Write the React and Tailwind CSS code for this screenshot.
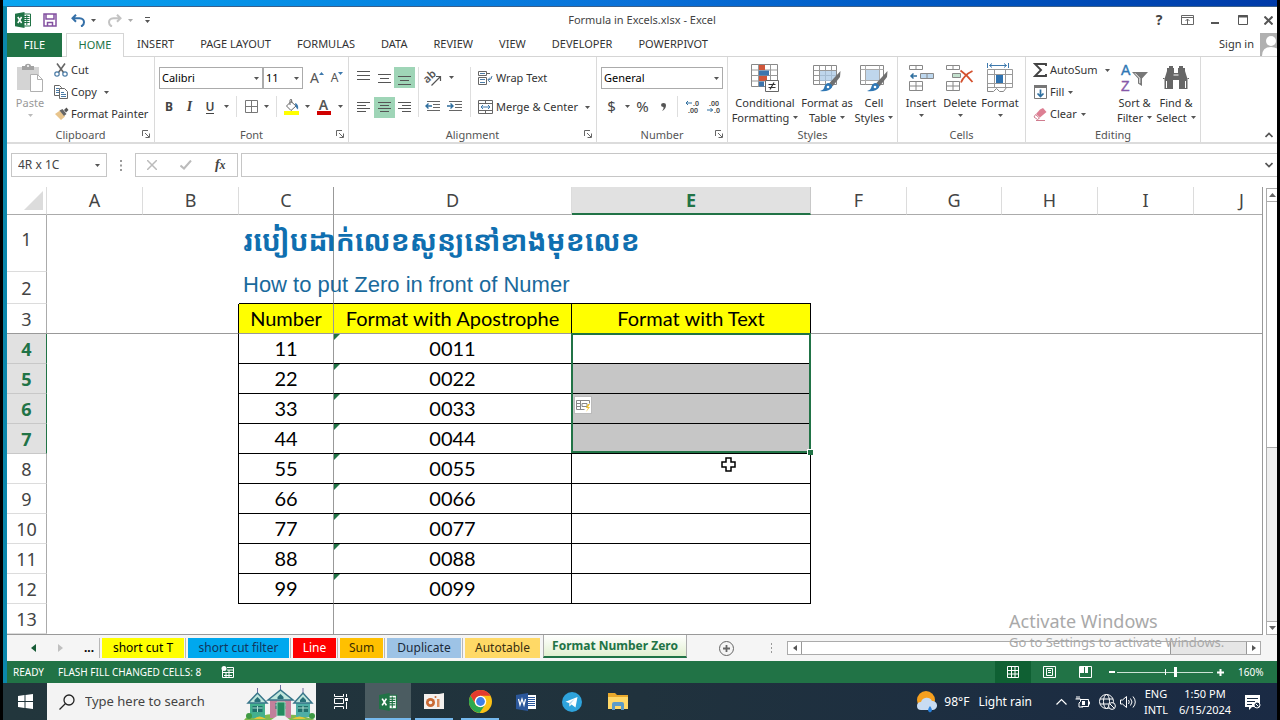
import React from "react";

const ui = "font-['Noto_Sans','Open_Sans',sans-serif]";

function Caret({ className = "", fill = "#555" }) {
  return (
    <svg width="5" height="3" viewBox="0 0 5 3" className={`shrink-0 ${className}`} aria-hidden="true">
      <path d="M0 0h5L2.500 3z" fill={fill} />
    </svg>
  );
}

function CaretButton({ label, className = "" }) {
  return (
    <button aria-label={label} className={`flex items-center justify-center self-stretch ${className}`}>
      <Caret />
    </button>
  );
}

function Launcher({ label }) {
  return (
    <button aria-label={label} className="absolute right-1 top-1">
      <svg width="8" height="8" viewBox="0 0 8 8" fill="none" stroke="#666">
        <path d="M.5 6V.5H6M3 3l4 4M7.500 3.500v4h-4" />
      </svg>
    </button>
  );
}

function Group({ name, launcher, width, children }) {
  return (
    <section aria-label={name} className={`flex shrink-0 flex-col ${width}`}>
      <div className="flex grow border-r border-[#dadada]">
        <div className="flex grow flex-col">
          <div className="flex h-[69px] items-start">{children}</div>
          <div className="relative h-4 text-center leading-[18px] text-[#555]">
            {name}
            {launcher && <Launcher label={`${name} settings`} />}
          </div>
        </div>
      </div>
    </section>
  );
}

function Sep({ className = "h-[50px]" }) {
  return <div className={`w-px shrink-0 bg-[#dedede] ${className}`} />;
}

function IconButton({ label, active, className = "w-[21px]", children }) {
  return (
    <button
      aria-label={label}
      className={`flex h-[21px] shrink-0 items-center justify-center ${active ? "bg-[#9fd5b7]" : ""} ${className}`}
    >
      {children}
    </button>
  );
}

function Lines({ rows }) {
  return (
    <svg width="15" height="15" viewBox="0 0 15 15" stroke="#555" aria-hidden="true">
      {rows.map(([x1, x2, y]) => (
        <path key={y} d={`M${x1} ${y}.5H${x2}`} />
      ))}
    </svg>
  );
}

function BigButton({ icon, lines, caretBelow, muted, width }) {
  return (
    <button className={`flex shrink-0 flex-col items-center pt-1 leading-[15px] ${muted ? "text-[#999]" : "text-[#333]"} ${width}`}>
      <span className="flex h-[34px] items-center justify-center">{icon}</span>
      {lines.map((t, i) => (
        <span key={t} className="flex items-center gap-1 whitespace-nowrap">
          {t}
          {!caretBelow && i === lines.length - 1 && <Caret />}
        </span>
      ))}
      {caretBelow && <Caret className="mt-1" fill={muted ? "#bbb" : "#555"} />}
    </button>
  );
}

function SmallButton({ icon, children, caret }) {
  return (
    <button className="flex h-[22px] items-center gap-0.5 whitespace-nowrap text-[#333]">
      <span className="flex w-4 justify-center">{icon}</span>
      {children}
      {caret && <Caret className="ml-0.5" />}
    </button>
  );
}

function Picker({ label, value, width }) {
  return (
    <div className={`relative flex h-[22px] items-center ${width}`}>
      <select
        aria-label={label}
        defaultValue={value}
        className="h-full w-full appearance-none border border-[#ababab] bg-white pl-0.5 text-black outline-none"
      >
        <option>{value}</option>
      </select>
      <Caret className="pointer-events-none absolute right-1" />
    </div>
  );
}

/* ---------- ribbon drawings ---------- */

const ExcelMark = ({ size = 16 }) => (
  <svg width={size} height={size} viewBox="0 0 16 16" aria-hidden="true">
    <path d="M8 2h7.500v12H8z" fill="#fff" stroke="#217346" />
    <path d="M9 4.500h5.500M9 6.500h5.500M9 8.500h5.500M9 10.500h5.500M11.800 3v10" stroke="#217346" />
    <path d="M0 1.800 9.500 0v16L0 14.200z" fill="#217346" />
    <path d="m2.800 5 3.800 6M6.600 5l-3.800 6" stroke="#fff" strokeWidth="1.500" />
  </svg>
);

const PasteIcon = () => (
  <svg width="28" height="30" viewBox="0 0 28 30" aria-hidden="true">
    <path d="M1 4h22v23H1z" fill="#d4d4d4" />
    <path d="M6 7V3h3c0-3 6-3 6 0h3v4z" fill="#a2a2a2" />
    <circle cx="12" cy="3" r="1" fill="#fff" />
    <path d="M14.500 11.500h7l5 5v12h-12z" fill="#fff" stroke="#b0b0b0" />
    <path d="M21.500 11.500v5h5" fill="none" stroke="#b0b0b0" />
  </svg>
);

const CutIcon = () => (
  <svg width="14" height="14" viewBox="0 0 14 14" fill="none" aria-hidden="true">
    <path d="M3 0.500 9.500 9.500M11 .5 4.500 9.500" stroke="#666" strokeWidth="1.600" />
    <circle cx="3" cy="11" r="2.200" stroke="#4a7ba6" strokeWidth="1.200" />
    <circle cx="11" cy="11" r="2.200" stroke="#4a7ba6" strokeWidth="1.200" />
  </svg>
);

const CopyIcon = () => (
  <svg width="14" height="14" viewBox="0 0 14 14" fill="#fff" stroke="#666" aria-hidden="true">
    <path d="M.5.5h5l2 2v8h-7z" />
    <path d="M2 3.500h3M2 5.500h3M2 7.500h3" stroke="#4a7ba6" />
    <path d="M5.500 3.500h5l3 3v7h-8z" />
    <path d="M7 7.500h3M7 9.500h5M7 11.500h5" stroke="#4a7ba6" />
  </svg>
);

const BrushIcon = () => (
  <svg width="15" height="14" viewBox="0 0 15 14" aria-hidden="true">
    <path d="M1 7 6 3.500l5 6L7 13z" fill="#e8c48c" />
    <path d="m5.500 3.500 3-1.500 4 5-2.500 2z" fill="#666" />
    <path d="m10 3 2.500-2.500 2 2.500L12 5.500z" fill="#555" />
  </svg>
);

const BordersIcon = () => (
  <svg width="13" height="13" viewBox="0 0 13 13" fill="none" stroke="#777" aria-hidden="true">
    <path d="M.5.5h12v12H.5zM6.500.5v12M.5 6.500h12" />
  </svg>
);

const FillIcon = () => (
  <svg width="16" height="16" viewBox="0 0 16 16" aria-hidden="true">
    <path d="M0 12h15v4H0z" fill="#ffff00" />
    <path d="M7 2.500 12 7l-5 4.500L2.500 7z" fill="#fff" stroke="#666" />
    <path d="M6 6V1.500q0-1.500 1.500-1L8 4" fill="none" stroke="#666" />
    <path d="M11 4q4 1 3 6.500Q12 9 11.500 7z" fill="#3d79ad" />
  </svg>
);

const FontColorIcon = () => (
  <span className="flex flex-col items-center">
    <span className="h-3 text-sm font-semibold leading-3 text-[#555]">A</span>
    <span className="h-1 w-3.5 bg-[#d00000]" />
  </span>
);

const OrientIcon = () => (
  <svg width="16" height="16" viewBox="0 0 16 16" className="overflow-visible" aria-hidden="true">
    <text x="0" y="11" fontSize="11" fontWeight="600" fill="#555" transform="rotate(-42 4 11)" fontFamily="Noto Sans">ab</text>
    <path d="M5.500 15.500 14 7M10 6.500h4.500V11" fill="none" stroke="#555" strokeWidth="1.200" />
  </svg>
);

const IndentIcon = ({ out }) => (
  <svg width="15" height="11" viewBox="0 0 15 11" fill="none" aria-hidden="true">
    <path d="M2 .5h13M8 3.500h7M8 6.500h7M2 9.500h13" stroke="#666" />
    <path d={out ? "M7 5H1M3.500 2.500 1 5l2.500 2.500" : "M0 5h6M3.500 2.500 6 5 3.500 7.500"} stroke="#2f6f9f" strokeWidth="1.400" />
  </svg>
);

const WrapIcon = () => (
  <svg width="15" height="14" viewBox="0 0 15 14" fill="none" stroke="#666" aria-hidden="true">
    <path d="M.5.500h8v4h-8zM.5 6.500h8v7h-8zM8.500 2.500H12" />
    <path d="M2 2.500h5M2 8.500h5M2 11.500h5" stroke="#4a7ba6" />
    <path d="M14 5q0 4-4 4M12 6.500 9.800 9l2.200 2" stroke="#4a7ba6" />
  </svg>
);

const MergeIcon = () => (
  <svg width="15" height="14" viewBox="0 0 15 14" fill="none" stroke="#666" aria-hidden="true">
    <path d="M.5.500h14v13H.5zM.5 3.500h14M.5 10.500h14M7.500.500v3M7.500 10.500v3" />
    <path d="M3 7h9M5 5 3 7l2 2M10 5l2 2-2 2" stroke="#3d79ad" />
  </svg>
);

const DecimalIcon = ({ less }) => (
  <svg width="15" height="13" viewBox="0 0 15 13" fontFamily="Noto Sans" fontSize="7" fill="#444" aria-hidden="true">
    <text x={less ? 3 : 8} y="5.500" fontWeight="600">{less ? ".00" : ".0"}</text>
    <text x={less ? 8 : 3} y="12.500" fontWeight="600">{less ? ".0" : ".00"}</text>
    <path d={less ? "M1 10h6M4.500 8l2 2-2 2" : "M1 3h6M3 1 1 3l2 2"} fill="none" stroke="#2f6f9f" />
  </svg>
);

const CondIcon = () => (
  <svg width="28" height="28" viewBox="0 0 28 28" aria-hidden="true">
    <path d="M.5.500h26v22H.5z" fill="#fff" stroke="#888" />
    <path d="M.5 6h26M.5 11.500h26M.5 17h26M7.500.500v22M19.500.500v22" stroke="#999" />
    <path d="M8 1h6v5H8zM8 12h8v5H8z" fill="#d0563a" />
    <path d="M8 6.500h10v5H8zM8 17.500h5v5H8z" fill="#3d75ad" />
    <path d="M14.500 16.500h13v11h-13z" fill="#fff" stroke="#666" />
    <path d="M17.500 20.500h7M17.500 23.500h7M23 18.500l-4 7" stroke="#333" strokeWidth="1.200" />
  </svg>
);

const TableBrushIcon = ({ plain }) => (
  <svg width="28" height="28" viewBox="0 0 28 28" aria-hidden="true">
    <path d="M.5 1.500h23v19H.5z" fill="#fff" stroke="#888" />
    {plain ? (
      <path d="M.5 5.500h23M.5 16.500h23M5.500 1.500v19M19.500 1.500v19" stroke="#aaa" />
    ) : (
      <path d="M.5 6.500h23M.5 11.500h23M.5 16.500h23M6.500 1.500v19M12.500 1.500v19M18.500 1.500v19" stroke="#999" />
    )}
    <path d={plain ? "M6 6h13v10H6z" : "M7 7h16v10H7z"} fill="#a9c8e6" fillOpacity=".75" />
    <path d="M27.500 7 16 19.500l3.500 3L27 13z" fill="#707070" />
    <path d="M15.500 19q4.500 1 3.500 4.500Q16 28 7 27q4-1 4.500-4.500 1-3.500 4-3.500z" fill="#2f77b4" />
    <circle cx="15" cy="23" r="1.300" fill="#fff" />
  </svg>
);

const InsertIcon = () => (
  <svg width="26" height="27" viewBox="0 0 26 27" fill="#fff" stroke="#888" aria-hidden="true">
    <path d="M1.500.500h13v4h-13zM8 .5v4M1.500 16.500h13v9h-13zM8 16.500v9M1.500 21h13" />
    <path d="M12.500 8.500h13v5h-13zM19 8.500v5" fill="#bdd7ee" />
    <path d="M9 11H3M5.500 8.500 3 11l2.500 2.500" fill="none" stroke="#2f6f9f" strokeWidth="1.500" />
  </svg>
);

const DeleteIcon = () => (
  <svg width="28" height="27" viewBox="0 0 28 27" fill="#fff" stroke="#888" aria-hidden="true">
    <path d="M.5.500h13v4H.5zM7 .5v4M.5 16.500h13v9H.5zM7 16.500v9M.5 21h13" />
    <path d="M6.500 8.500h8v4h-8z" fill="#c3e0cd" />
    <path d="M14.500 5.500Q21 10 26.500 17M26.500 6Q18 10 15 17.500" fill="none" stroke="#d4512e" strokeWidth="1.800" />
  </svg>
);

const FormatIcon = () => (
  <svg width="28" height="30" viewBox="0 0 28 30" fill="none" aria-hidden="true">
    <path d="M1.500 0v5M22.500 0v5M3.500 2.500h17M6 .5l-2.500 2L6 4.500M18 .5l2.500 2L18 4.500" stroke="#3d79ad" />
    <path d="M1.500 6.500h25v18h-25zM1.500 11.500h25M1.500 20.500h25M8.500 6.500v18M19.500 6.500v18" stroke="#999" fill="#fff" />
    <path d="M10 12h7v8h-7z" fill="#2f72b0" />
    <path d="M1.500 24v4.500h6l3-3 3 3h4l3-4" stroke="#888" />
  </svg>
);

const SumIcon = () => (
  <svg width="14" height="14" viewBox="0 0 14 14" fill="none" aria-hidden="true">
    <path d="M13 3V1H2l6 6-6 6h11v-2" stroke="#444" strokeWidth="1.900" />
  </svg>
);

const FillDownIcon = () => (
  <svg width="13" height="14" viewBox="0 0 13 14" fill="none" aria-hidden="true">
    <path d="M.5.500h12v13H.5z" stroke="#777" />
    <path d="M0 0h13v3H0z" fill="#777" />
    <path d="M6.500 4.500v7M3.500 8.500l3 3 3-3" stroke="#2f6f9f" strokeWidth="1.700" />
  </svg>
);

const EraserIcon = () => (
  <svg width="14" height="13" viewBox="0 0 14 13" aria-hidden="true">
    <path d="M7 1.500 10 0l3.500 4L7 9.500 3 6z" fill="#dd7f93" />
    <path d="M2.500 6.500 6.500 10l-2 1.500L1 9z" fill="#fff" stroke="#cf7c8e" />
    <path d="M3 12.500h9" stroke="#cf7c8e" />
  </svg>
);

const SortIcon = () => (
  <svg width="28" height="28" viewBox="0 0 28 28" className="overflow-visible" aria-hidden="true">
    <g fontFamily="Liberation Sans" fontSize="14" strokeWidth=".4">
      <text x="0" y="11" fill="#2f77b4" stroke="#2f77b4">A</text>
      <text x="0" y="27" fill="#8658a8" stroke="#8658a8">Z</text>
    </g>
    <path d="M11 8h16l-6 6.500V22l-4-2.500v-5z" fill="#777" />
    <path d="M14 9.300 18.800 14.200v5" fill="none" stroke="#fff" />
  </svg>
);

const FindIcon = () => (
  <svg width="26" height="24" viewBox="0 0 26 24" fill="#666" aria-hidden="true">
    <path d="M4 5V2h2V0h4v2h1v5h4V2h1V0h4v2h2v3l2.500 8v10H16v-9h-6v9H1.500V13z" />
    <path d="M3.500 15v7M22.500 15v7M10.500 9h5" stroke="#fff" />
    <path d="M0 12.500h1.500M24.500 12.500H26" stroke="#666" />
  </svg>
);

/* ---------- window chrome ---------- */

function TitleBar() {
  return (
    <header className="grid h-[26px] grid-cols-[1fr_auto_1fr] items-center text-[#444]">
      <div className="flex items-center pl-2">
        <ExcelMark />
        <button aria-label="Save" className="ml-3">
          <svg width="14" height="14" viewBox="0 0 14 14" fill="none" stroke="#8250a0" strokeWidth="1.500">
            <path d="M1 1h12v12H1z" fill="#fff" />
            <path d="M3 1v5h8V1" />
            <path d="M4.500 13V9.500h5V13" />
          </svg>
        </button>
        <button aria-label="Undo" className="ml-3.5 flex items-center gap-1.5">
          <svg width="14" height="13" viewBox="0 0 14 13" fill="none" stroke="#3570a8" strokeWidth="2">
            <path d="M5 .8 1.500 4.300 5 7.800M2 4.300h6.500c3.500 0 4.500 2.500 4.500 4 0 2-1 3.500-3 4.200" />
          </svg>
          <Caret />
        </button>
        <button aria-label="Redo" className="ml-3 flex items-center gap-1.5 opacity-50">
          <svg width="14" height="13" viewBox="0 0 14 13" fill="none" stroke="#888" strokeWidth="2">
            <path d="M9 .8l3.500 3.500L9 7.800M12 4.300H5.500C2 4.300 1 6.800 1 8.300c0 2 1 3.500 3 4.200" />
          </svg>
          <Caret />
        </button>
        <button aria-label="Customize toolbar" className="ml-3">
          <svg width="5" height="6" viewBox="0 0 5 6"><path d="M0 0h5v1H0zM0 3h5L2.500 6z" fill="#555" /></svg>
        </button>
      </div>
      <h1 className="text-[11px]">Formula in Excels.xlsx - Excel</h1>
      <div className="flex items-center justify-end gap-4">
        <button aria-label="Help" className="w-3 text-sm font-bold leading-4">?</button>
        <button aria-label="Ribbon options">
          <svg width="13" height="10" viewBox="0 0 13 10" fill="none" stroke="#666"><path d="M.5.500h12v9H.5zM.5 2.500h12M6.500 9V4M4.500 6l2-2 2 2" /></svg>
        </button>
        <button aria-label="Minimize">
          <svg width="10" height="10" viewBox="0 0 10 10"><path d="M1 7h8v2H1z" fill="#555" /></svg>
        </button>
        <button aria-label="Maximize" className="ml-0.5">
          <svg width="10" height="10" viewBox="0 0 10 10" fill="none" stroke="#555"><path d="M.5.500h9v9h-9z" /><path d="M0 1.500h10" strokeWidth="2" /></svg>
        </button>
        <button aria-label="Close" className="mr-1">
          <svg width="9" height="9" viewBox="0 0 9 9" stroke="#555" strokeWidth="2"><path d="m.5.500 8 8M8.500.500l-8 8" /></svg>
        </button>
      </div>
    </header>
  );
}

const tabs = ["INSERT", "PAGE LAYOUT", "FORMULAS", "DATA", "REVIEW", "VIEW", "DEVELOPER", "POWERPIVOT"];

function TabRow() {
  return (
    <nav className="flex h-6 text-[#333]">
      <button className="w-[55px] bg-[#217346] text-white">FILE</button>
      <div className="w-1 border-b border-[#d5d5d5]" />
      <button className="w-[58px] border-x border-t border-[#d5d5d5] text-[#217346]">HOME</button>
      <div className="flex grow items-center border-b border-[#d5d5d5]">
        {tabs.map((t) => (
          <button key={t} className="px-[13px]">{t}</button>
        ))}
        <button className="ml-auto mr-1.5">Sign in</button>
        <svg width="17" height="23" viewBox="0 0 17 23" aria-hidden="true">
          <path d="M0 0h17v23H0z" fill="#b0b0b0" />
          <circle cx="11" cy="8" r="5" fill="#fff" />
          <path d="M2 23q0-9 9-9t9 9z" fill="#fff" />
        </svg>
      </div>
    </nav>
  );
}

function Ribbon() {
  return (
    <div className="flex h-[87px] border-b-2 border-[#dcdcdc]">
      <Group name="Clipboard" launcher width="w-[148px]">
        <BigButton muted icon={<PasteIcon />} lines={["Paste"]} caretBelow width="w-[46px]" />
        <div className="flex flex-col items-start pt-0.5">
          <SmallButton icon={<CutIcon />}>Cut</SmallButton>
          <span className="flex">
            <SmallButton icon={<CopyIcon />}>Copy</SmallButton>
            <CaretButton label="Copy options" className="w-5" />
          </span>
          <SmallButton icon={<BrushIcon />}>Format Painter</SmallButton>
        </div>
      </Group>

      <Group name="Font" launcher width="w-[194px]">
        <div className="flex flex-col gap-2 pl-1 pt-2.5">
          <div className="flex">
            <Picker label="Font" value="Calibri" width="w-[104px]" />
            <Picker label="Font size" value="11" width="w-10" />
            <IconButton label="Increase font size" className="ml-1 w-5">
              <span className="text-sm text-[#555]">A</span>
              <svg width="5" height="3" viewBox="0 0 5 3" className="mb-2"><path d="M0 3h5L2.500 0z" fill="#3d79ad" /></svg>
            </IconButton>
            <IconButton label="Decrease font size" className="w-5">
              <span className="text-xs text-[#555]">A</span>
              <svg width="5" height="3" viewBox="0 0 5 3" className="mb-2"><path d="M0 0h5L2.500 3z" fill="#3d79ad" /></svg>
            </IconButton>
          </div>
          <div className="-mt-px flex text-xs text-[#444]">
            <IconButton label="Bold" className="w-5"><b>B</b></IconButton>
            <IconButton label="Italic"><i className="font-['Liberation_Serif',serif] text-sm font-bold">I</i></IconButton>
            <IconButton label="Underline" className="w-5"><span className="border-b border-[#444] font-semibold leading-[13px]">U</span></IconButton>
            <CaretButton label="Underline style" className="w-3" />
            <Sep className="mx-1 h-[21px]" />
            <IconButton label="Borders"><BordersIcon /></IconButton>
            <CaretButton label="Border style" className="w-2" />
            <Sep className="mx-1.5 h-[21px]" />
            <IconButton label="Fill color" className="w-[18px]"><FillIcon /></IconButton>
            <CaretButton label="Fill colors" className="w-3" />
            <IconButton label="Font color"><FontColorIcon /></IconButton>
            <CaretButton label="Font colors" className="w-3" />
          </div>
        </div>
      </Group>

      <Group name="Alignment" launcher width="w-[248px]">
        <div className="flex gap-[3px] pl-1 pt-2.5">
          <div className="grid grid-cols-3 gap-y-2">
            <IconButton label="Top align"><Lines rows={[[1, 14, 1], [1, 14, 5], [1, 14, 9]]} /></IconButton>
            <IconButton label="Middle align"><Lines rows={[[1, 14, 4], [3, 12, 8], [1, 14, 12]]} /></IconButton>
            <IconButton label="Bottom align" active><Lines rows={[[1, 14, 6], [3, 12, 10], [1, 14, 14]]} /></IconButton>
            <IconButton label="Align left"><Lines rows={[[1, 14, 2], [1, 10, 5], [1, 14, 8], [1, 10, 11]]} /></IconButton>
            <IconButton label="Center" active><Lines rows={[[1, 14, 2], [3, 12, 5], [1, 14, 8], [3, 12, 11]]} /></IconButton>
            <IconButton label="Align right"><Lines rows={[[1, 14, 2], [5, 14, 5], [1, 14, 8], [5, 14, 11]]} /></IconButton>
          </div>
          <Sep />
          <div className="flex w-[46px] flex-col gap-2">
            <span className="flex">
              <IconButton label="Orientation" className="w-6"><OrientIcon /></IconButton>
              <CaretButton label="Orientation options" className="w-3" />
            </span>
            <span className="flex gap-px">
              <IconButton label="Decrease indent"><IndentIcon out /></IconButton>
              <IconButton label="Increase indent"><IndentIcon /></IconButton>
            </span>
          </div>
          <Sep />
          <div className="flex flex-col gap-2 pl-1">
            <SmallButton icon={<WrapIcon />}>Wrap Text</SmallButton>
            <span className="-mt-px flex">
              <SmallButton icon={<MergeIcon />}>Merge &amp; Center</SmallButton>
              <CaretButton label="Merge options" className="w-[18px]" />
            </span>
          </div>
        </div>
      </Group>

      <Group name="Number" launcher width="w-[131px]">
        <div className="flex flex-col gap-2 pl-1 pt-2.5">
          <Picker label="Number format" value="General" width="w-[122px]" />
          <div className="-mt-px flex text-[15px] text-[#444]">
            <IconButton label="Currency">$</IconButton>
            <CaretButton label="Currency options" className="w-2.5" />
            <IconButton label="Percent">%</IconButton>
            <IconButton label="Comma style" className="w-5">
              <svg width="5" height="8" viewBox="0 0 5 8"><path d="M0 2a2.500 2 0 0 1 5 0q0 4-4 6 2-2 1.500-4Q0 4 0 2z" fill="#555" /></svg>
            </IconButton>
            <Sep className="mx-1 h-[21px]" />
            <IconButton label="Increase decimal"><DecimalIcon /></IconButton>
            <IconButton label="Decrease decimal"><DecimalIcon less /></IconButton>
          </div>
        </div>
      </Group>

      <Group name="Styles" width="w-[170px]">
        <BigButton icon={<CondIcon />} lines={["Conditional", "Formatting"]} width="w-[74px]" />
        <BigButton icon={<TableBrushIcon />} lines={["Format as", "Table"]} width="w-[50px]" />
        <BigButton icon={<TableBrushIcon plain />} lines={["Cell", "Styles"]} width="w-[44px]" />
      </Group>

      <Group name="Cells" width="w-[128px]">
        <div className="flex pl-1">
          <BigButton icon={<InsertIcon />} lines={["Insert"]} caretBelow width="w-[38px]" />
          <BigButton icon={<DeleteIcon />} lines={["Delete"]} caretBelow width="w-10" />
          <BigButton icon={<FormatIcon />} lines={["Format"]} caretBelow width="w-10" />
        </div>
      </Group>

      <Group name="Editing" width="w-[175px]">
        <div className="flex w-[87px] flex-col items-start pl-1.5 pt-0.5">
          <span className="flex">
            <SmallButton icon={<SumIcon />}>AutoSum</SmallButton>
            <CaretButton label="AutoSum options" className="w-5" />
          </span>
          <SmallButton icon={<FillDownIcon />} caret>Fill</SmallButton>
          <SmallButton icon={<EraserIcon />} caret>Clear</SmallButton>
        </div>
        <BigButton icon={<SortIcon />} lines={["Sort &", "Filter"]} width="w-[43px]" />
        <BigButton icon={<FindIcon />} lines={["Find &", "Select"]} width="w-[40px]" />
      </Group>
      <div className="flex grow items-end justify-end pb-1 pr-1">
        <button aria-label="Collapse ribbon">
          <svg width="8" height="6" viewBox="0 0 8 6" fill="none" stroke="#555" strokeWidth="1.700"><path d="m.5 5 3.500-3.500L7.500 5" /></svg>
        </button>
      </div>
    </div>
  );
}

function FormulaBar() {
  return (
    <div className="flex h-[43px] items-center pb-px pl-1 text-[#444]">
      <div className="flex h-6 w-24 items-center border border-[#c6c6c6] pr-1.5">
        <input aria-label="Name box" defaultValue="4R x 1C" className="w-full min-w-0 pl-1.5 text-xs outline-none" />
        <Caret />
      </div>
      <svg width="2" height="11" viewBox="0 0 2 11" className="mx-[13px]" fill="#999" aria-hidden="true">
        <path d="M0 0h2v2H0zM0 4.500h2v2H0zM0 9h2v2H0z" />
      </svg>
      <div className="flex h-6 w-[103px] items-center justify-around border border-[#c6c6c6]">
        <button aria-label="Cancel">
          <svg width="10" height="10" viewBox="0 0 10 10" stroke="#bbb" strokeWidth="1.500"><path d="m0 0 10 10M10 0 0 10" /></svg>
        </button>
        <button aria-label="Enter">
          <svg width="12" height="10" viewBox="0 0 12 10" fill="none" stroke="#bbb" strokeWidth="2"><path d="m.5 5.500 3.500 3 7-8" /></svg>
        </button>
        <button aria-label="Insert function" className="font-['Liberation_Serif',serif] text-sm font-bold italic leading-4">
          f<span className="text-xs">x</span>
        </button>
      </div>
      <div className="ml-[3px] flex h-6 grow items-center border border-r-0 border-[#c6c6c6] pr-1">
        <input aria-label="Formula" className="w-full outline-none" />
        <button aria-label="Expand formula bar">
          <svg width="8" height="6" viewBox="0 0 8 6" fill="none" stroke="#555" strokeWidth="1.700"><path d="m.5 1 3.500 3.500L7.500 1" /></svg>
        </button>
      </div>
    </div>
  );
}

/* ---------- sheet ---------- */

const letters = ["A", "B", "C", "D", "E", "F", "G", "H", "I", "J"];
const numbers = [11, 22, 33, 44, 55, 66, 77, 88, 99];

function RowHead({ n, selected, freeze }) {
  return (
    <th
      scope="row"
      className={`border-b border-r p-0 ${n === 1 ? "pb-2" : ""} ${
        selected
          ? "border-b-[#c8c8c8] border-r-[#217346] bg-[#e1e1e1] font-bold text-[#217346]"
          : `border-r-[#ababab] font-normal text-[#444] ${freeze ? "border-b-[#999]" : "border-b-[#dcdcdc]"}`
      }`}
    >
      {n}
    </th>
  );
}

function Plain({ n, freeze }) {
  return Array.from({ length: n }, (_, i) => <td key={i} className={freeze ? "border-b border-[#999]" : ""} />);
}

function Sheet() {
  return (
    <table className="w-[1263px] table-fixed border-separate border-spacing-0 text-xl/6 text-black">
      <colgroup>
        <col className="w-10" />
        <col className="w-24" />
        <col className="w-24" />
        <col className="w-[95px]" />
        <col className="w-[238px]" />
        <col className="w-[239px]" />
        <col className="w-24" />
        <col className="w-[95px]" />
        <col className="w-24" />
        <col className="w-24" />
        <col className="w-24" />
      </colgroup>
      <thead className="font-['Noto_Sans',sans-serif] text-lg/6">
        <tr className="h-7">
          <th className="border-b border-r border-b-[#ababab] border-r-[#dcdcdc] p-0">
            <svg width="19" height="19" viewBox="0 0 19 19" className="ml-auto mr-[3px]" aria-hidden="true"><path d="M19 0v19H0z" fill="#dcdcdc" /></svg>
          </th>
          {letters.map((l) => (
            <th
              key={l}
              scope="col"
              className={`border-r p-0 ${
                l === "E"
                  ? "border-b-2 border-b-[#217346] border-r-[#c8c8c8] bg-[#e1e1e1] font-bold text-[#217346]"
                  : `border-b border-b-[#ababab] pb-px font-normal text-[#444] ${l === "C" ? "border-r-[#999]" : "border-r-[#dcdcdc]"}`
              }`}
            >
              {l}
            </th>
          ))}
        </tr>
      </thead>
      <tbody className="font-['Lato','Noto_Sans',sans-serif] [&_th]:font-['Noto_Sans',sans-serif] [&_th]:text-lg/6">
        <tr className="h-[57px]">
          <RowHead n={1} />
          <Plain n={2} />
          <td className="whitespace-nowrap border-r border-[#999] p-0 pb-2 pl-1 align-middle font-['Khmer_OS_Muol_Light','Noto_Sans_Khmer','Noto_Serif_Khmer',sans-serif] text-[28px]/6 font-bold text-[#0f6fb0]">
            របៀបដាក់លេខសូន្យនៅខាងមុខលេខ
          </td>
          <Plain n={7} />
        </tr>
        <tr className="h-8">
          <RowHead n={2} />
          <Plain n={2} />
          <td className="whitespace-nowrap border-b border-r border-b-black border-r-[#999] p-0 pl-1 font-['Liberation_Sans',sans-serif] text-[22px]/6 text-[#1a6a9c]">
            <span className="block pb-1.5">How to put Zero in front of Numer</span>
          </td>
          <td className="border-b border-black" />
          <td className="border-b border-black" />
          <Plain n={5} />
        </tr>
        <tr className="h-[30px]">
          <RowHead n={3} freeze />
          <td className="border-b border-[#999]" />
          <td className="border-b border-r border-b-[#999] border-r-black" />
          <td className="border-b border-r border-[#999] bg-[#ffff00] p-0 pb-0.5 text-center">Number</td>
          <td className="border-b border-r border-b-[#999] border-r-black bg-[#ffff00] p-0 pb-0.5 text-center">Format with Apostrophe</td>
          <td className="border-b border-r border-b-[#999] border-r-black bg-[#ffff00] p-0 pb-0.5 text-center">Format with Text</td>
          <Plain n={5} freeze />
        </tr>
        {numbers.map((v, i) => {
          const n = i + 4;
          return (
            <tr key={n} className="h-[30px]">
              <RowHead n={n} selected={n < 8} />
              <td />
              <td className="border-r border-black" />
              <td className="border-b border-r border-b-black border-r-[#999] p-0 pb-0.5 text-center">{v}</td>
              <td className="relative border-b border-r border-black p-0 pb-0.5 text-center">
                <svg width="6" height="6" viewBox="0 0 6 6" className="absolute left-0 top-0" aria-hidden="true"><path d="M0 0h6L0 6z" fill="#217346" /></svg>
                00{v}
              </td>
              <td className={`relative border-b border-r border-black p-0 ${n > 4 && n < 8 ? "bg-[#c6c6c6]" : ""}`}>
                {n === 4 && (
                  <div className="pointer-events-none absolute -left-px -top-px z-10 h-[120px] w-[240px] border-2 border-[#217346]">
                    <div className="absolute -bottom-1 -right-1 size-[6px] border-l border-t border-white bg-[#217346]" />
                  </div>
                )}
                {n === 6 && (
                  <button aria-label="Flash fill options" className="absolute left-0.5 top-0.5 z-20 flex size-[18px] items-center justify-center border border-[#bbb] bg-white">
                    <svg width="15" height="15" viewBox="0 0 15 15" fill="none" stroke="#888">
                      <path d="M.5 2.500h13v3M.5 2.500v9h8M.5 5.500h4M.5 8.500h4M4.500 2.500v9M6 5.500h5v3H6z" />
                      <path d="m12 6-2 4h2l-2 4 4-5h-2l2-3z" fill="#f2c230" stroke="none" />
                    </svg>
                  </button>
                )}
                {n === 8 && (
                  <svg width="15" height="15" viewBox="0 0 15 15" className="absolute left-[149px] top-[3px]" aria-hidden="true">
                    <path d="M5 1h5v4h4v5h-4v4H5v-4H1V5h4z" fill="#fff" stroke="#000" strokeWidth="1.500" />
                  </svg>
                )}
              </td>
              <Plain n={5} />
            </tr>
          );
        })}
        <tr className="h-[30px]">
          <RowHead n={13} />
          <Plain n={2} />
          <td className="border-r border-[#999]" />
          <Plain n={7} />
        </tr>
      </tbody>
    </table>
  );
}

const sheets = [
  { name: "short cut T", style: "w-[82px] bg-[#ffff00] text-black" },
  { name: "short cut filter", style: "w-[101px] bg-[#00a8ee] text-[#12365c]" },
  { name: "Line", style: "w-[43px] bg-[#ff0000] text-white" },
  { name: "Sum", style: "w-[43px] bg-[#ffc000] text-[#3a2c00]" },
  { name: "Duplicate", style: "w-[74px] bg-[#9dc3e6] text-[#1b2a3a]" },
  { name: "Autotable", style: "w-[75px] bg-[#ffd966] text-[#3a2f10]" },
];

function SheetTabs() {
  return (
    <div className="flex h-[26px] items-center bg-[#f5f5f5] text-xs">
      <button aria-label="Previous sheet" className="ml-6">
        <svg width="5" height="8" viewBox="0 0 5 8"><path d="M5 0v8L0 4z" fill="#175c36" /></svg>
      </button>
      <button aria-label="Next sheet" className="ml-[22px]">
        <svg width="5" height="8" viewBox="0 0 5 8"><path d="M0 0v8l5-4z" fill="#c0c0c0" /></svg>
      </button>
      <button aria-label="More sheets" className="ml-4 w-5 font-bold">...</button>
      <div className="mr-0.5 flex h-full items-stretch py-[3px]">
        {sheets.map((s) => (
          <div key={s.name} className="flex border-l border-[#b8b8b8] pl-[2px] pr-px">
            <button className={`whitespace-nowrap ${s.style}`}>{s.name}</button>
          </div>
        ))}
      </div>
      <button className="mb-[3px] h-[23px] w-36 whitespace-nowrap border-x border-b-2 border-x-[#ababab] border-b-[#217346] bg-gradient-to-b from-white to-[#e2f0d0] font-bold text-[#217346]">
        Format Number Zero
      </button>
      <button aria-label="New sheet" className="ml-8">
        <svg width="15" height="15" viewBox="0 0 15 15" fill="none" stroke="#666"><circle cx="7.500" cy="7.500" r="7" /><path d="M7.500 4v7M4 7.500h7" strokeWidth="1.800" /></svg>
      </button>
      <svg width="2" height="10" viewBox="0 0 2 10" className="ml-[37px] mr-3.5" fill="#999" aria-hidden="true"><path d="M0 0h1v2H0zM0 4h1v2H0zM0 8h1v2H0z" /></svg>
      <div className="mr-4 flex h-3.5 grow border border-[#ababab] bg-[#e6e6e6]">
        <button aria-label="Scroll left" className="flex w-3.5 items-center justify-center border-r border-[#999] bg-white">
          <svg width="4" height="6" viewBox="0 0 4 6"><path d="M4 0v6L0 3z" fill="#555" /></svg>
        </button>
        <div className="mr-[75px] grow border-r border-[#999] bg-white" />
        <button aria-label="Scroll right" className="flex w-3.5 items-center justify-center border-l border-[#999] bg-white">
          <svg width="4" height="6" viewBox="0 0 4 6"><path d="M0 0v6l4-3z" fill="#555" /></svg>
        </button>
      </div>
    </div>
  );
}

function StatusBar() {
  return (
    <div className="flex h-[22px] items-center bg-[#217346] pl-1.5 pr-3 text-[10px] text-white">
      <span>READY</span>
      <span className="ml-3.5">FLASH FILL CHANGED CELLS: 8</span>
      <svg width="13" height="12" viewBox="0 0 13 12" className="ml-5" fill="none" stroke="#fff" aria-hidden="true">
        <path d="M1.500 4v7.500h11v-10H6M1.500 6.500h11M3 9.500h8M5 6v5M8 4v7M6 4h6" />
        <circle cx="3" cy="2.500" r="2.500" fill="#fff" stroke="none" />
      </svg>
      <button aria-label="Normal view" className="ml-auto flex h-full w-9 items-center justify-center bg-[#0f6033]">
        <svg width="12" height="12" viewBox="0 0 12 12" fill="none" stroke="#fff"><path d="M.5.500h11v11H.5zM4.500.500v11M8 .5v11M.5 4.500h11M.5 8h11" /></svg>
      </button>
      <button aria-label="Page layout view" className="flex w-9 justify-center">
        <svg width="13" height="12" viewBox="0 0 13 12" fill="none" stroke="#fff"><path d="M.5.500h12v11H.5zM3.500 2.500h6v7h-6zM5 4.500h3M5 6.500h3" /></svg>
      </button>
      <button aria-label="Page break view" className="flex w-9 justify-center">
        <svg width="13" height="12" viewBox="0 0 13 12" fill="none" stroke="#fff"><path d="M.5.500h12v11H.5z" /><path d="M1 1h4v6H1zM6 1h3v6H6z" fill="#fff" stroke="none" /></svg>
      </button>
      <button aria-label="Zoom out" className="ml-1.5 h-0.5 w-1.5 bg-white" />
      <div className="relative ml-0.5 flex h-4 w-24 items-center">
        <input
          type="range"
          aria-label="Zoom"
          min="0"
          max="100"
          defaultValue="61"
          className="h-px w-full appearance-none bg-[#cde3d6] [&::-webkit-slider-thumb]:h-2.5 [&::-webkit-slider-thumb]:w-[3px] [&::-webkit-slider-thumb]:appearance-none [&::-webkit-slider-thumb]:bg-white"
        />
        <div className="absolute left-1/2 h-1.5 w-px bg-white" />
      </div>
      <button aria-label="Zoom in" className="ml-1">
        <svg width="7" height="7" viewBox="0 0 7 7" stroke="#fff" strokeWidth="2"><path d="M0 3.500h7M3.500 0v7" /></svg>
      </button>
      <span className="ml-3.5 w-[27px] whitespace-nowrap">160%</span>
    </div>
  );
}

/* ---------- taskbar ---------- */

const House = ({ x, y, w, h, wall }) => (
  <g>
    <path d={`M${x + w / 2} ${y - 5}V${y}`} stroke="#6f6fa0" />
    <path d={`M${x + 2} ${y + 9}h${w - 4}v${h - 9}h-${w - 4}z`} fill={wall} />
    <path d={`M${x} ${y + 10} ${x + w / 2} ${y} ${x + w} ${y + 10}z`} fill="#bfe6dc" stroke="#39768a" strokeWidth="1.500" />
    <path d={`M${x + w / 2 - 3} ${y + 9}v-2l3-3 3 3v2z`} fill="#276f78" />
    <path d={`M${x + w / 2 - 5} ${y + 13}h10v6h-10z`} fill="#1f6f6c" />
    <path d={`M${x + w / 2 - 5} ${y + 15}h10M${x + w / 2} ${y + 13}v6`} stroke="#a9ded0" />
  </g>
);

const Houses = () => (
  <svg width="72" height="35" viewBox="0 0 72 35" aria-hidden="true">
    <path d="M0 35q4-6 17-4 14-4 20 0 14-4 34 4z" fill="#7fb84e" />
    <House x={4} y={8} w={19} h={25} wall="#43b08e" />
    <House x={50} y={8} w={18} h={24} wall="#4eaea5" />
    <House x={24} y={5} w={25} h={28} wall="#c2809b" />
    <path d="M33 17h8v14h-8z" fill="#238a5f" stroke="#9ed8c0" />
    <path d="M33 31h8l5 4H27z" fill="#eee" />
    <path d="M10 34q5-5 12 0zM48 34q8-5 14 0z" fill="#e2c63a" />
    <circle cx="5" cy="31" r="3" fill="#3f9a45" />
    <circle cx="68" cy="31" r="3" fill="#3f9a45" />
  </svg>
);

function TaskButton({ label, active, running, children, width = "w-[46px]" }) {
  return (
    <button
      aria-label={label}
      className={`relative flex h-full items-center justify-center ${width} ${active ? "bg-[#4b5c61]" : ""}`}
    >
      {children}
      {running && <span className={`absolute bottom-0 h-0.5 bg-[#76b9ed] ${active ? "inset-x-0" : "inset-x-1"}`} />}
    </button>
  );
}

function Taskbar() {
  return (
    <footer className="flex h-[37px] items-center bg-gradient-to-r from-[#22363c] via-[#20323d] to-[#1a2a44] text-white">
      <button aria-label="Start" className="flex w-11 justify-center">
        <svg width="15" height="15" viewBox="0 0 15 15" fill="#fff"><path d="M0 2l6.500-.9v6H0zM7.500 1 15 0v7.100H7.500zM0 8h6.500v6L0 13.100zM7.500 8H15v7l-7.500-1z" /></svg>
      </button>
      <label className="flex h-full w-[269px] items-center overflow-hidden bg-[#f3f3f3]">
        <svg width="16" height="16" viewBox="0 0 16 16" className="ml-3 shrink-0" fill="none" stroke="#222" strokeWidth="1.300" aria-hidden="true"><circle cx="10" cy="6" r="5" /><path d="M6.500 9.500.5 15.500" /></svg>
        <input aria-label="Search" placeholder="Type here to search" className="ml-[10px] w-0 grow text-[13px] outline-none placeholder:text-[#444]" />
        <span className="self-end"><Houses /></span>
      </label>
      <TaskButton label="Task view" width="w-[49px]">
        <svg width="17" height="15" viewBox="0 0 17 15" fill="none" stroke="#fff"><path d="M2.500 0v2.500h9V0M2.500 15v-2.500h9V15M2.500 4.500h9v5h-9zM14.500 0v3M14.500 8v7" /><path d="M13 4h3v3h-3z" fill="#fff" stroke="none" /></svg>
      </TaskButton>
      <TaskButton label="Excel" active running><ExcelMark size={18} /></TaskButton>
      <TaskButton label="Recorder" running>
        <svg width="20" height="17" viewBox="0 0 20 17"><path d="M0 1h15l5-1v16H0z" fill="#f4f1ee" /><circle cx="6.500" cy="9.500" r="4.500" fill="#c96a34" /><circle cx="6.500" cy="9.500" r="1.800" fill="#f4f1ee" /><circle cx="11.500" cy="4" r="1" fill="#c96a34" /><path d="M13 6h2.500v8H13z" fill="#d98a5a" /></svg>
      </TaskButton>
      <TaskButton label="Chrome" running>
        <svg width="23" height="23" viewBox="0 0 24 24">
          <circle cx="12" cy="12" r="12" fill="#fbc116" />
          <path d="M1.600 6A12 12 0 0 1 22.400 6H12a6 6 0 0 0-5.200 9z" fill="#e33b2e" />
          <path d="M1.600 6A12 12 0 0 0 11 24l6-9a6 6 0 0 1-10.200 0z" fill="#2da94f" />
          <circle cx="12" cy="12" r="6" fill="#fff" />
          <circle cx="12" cy="12" r="4.600" fill="#3f7fe8" />
        </svg>
      </TaskButton>
      <TaskButton label="Word">
        <svg width="20" height="18" viewBox="0 0 20 18"><path d="M10 2h10v14H10z" fill="#fff" /><path d="M12 4.500h7M12 6.500h7M12 8.500h7M12 10.500h7M12 12.500h7" stroke="#2b579a" /><path d="M0 2 12 0v18L0 16z" fill="#2b579a" /><path d="m2.500 6 1.500 6 2-6 2 6 1.500-6" fill="none" stroke="#fff" strokeWidth="1.200" /></svg>
      </TaskButton>
      <TaskButton label="Telegram">
        <svg width="20" height="20" viewBox="0 0 20 20"><circle cx="10" cy="10" r="10" fill="#2ea3dc" /><path d="m3.500 9.800 12-4.800-2 10.500-4-3-2 2-.5-3.500z" fill="#fff" /><path d="m7 11 6-4.500-4.500 5.500-1 2.500z" fill="#b9d9ec" /></svg>
      </TaskButton>
      <TaskButton label="File Explorer">
        <svg width="20" height="17" viewBox="0 0 20 17"><path d="M0 0h7l2 2h11v14H0z" fill="#e9a92c" /><path d="M0 4h20v12H0z" fill="#ffd868" /><path d="M4 17v-6q0-2 2-2h8q2 0 2 2v6h-3v-4H7v4z" fill="#5b9bc8" /></svg>
      </TaskButton>
      <div className="ml-auto flex h-full items-center">
        <button className="flex items-center gap-[7px] whitespace-nowrap text-xs">
          <svg width="21" height="22" viewBox="0 0 21 22" aria-hidden="true">
            <circle cx="10" cy="9" r="9" fill="#f6a01e" />
            <path d="M5 19a4 4 0 0 1 0-8 6 6 0 0 1 11-1 4.500 4.500 0 0 1 1 9z" fill="#c9dcf2" />
            <path d="M14 15q4 5 0 6.500-4-1.500 0-6.500z" fill="#2b83dd" />
          </svg>
          <span>98°F</span>
          <span className="ml-0.5">Light rain</span>
        </button>
        <button aria-label="Hidden icons" className="ml-6">
          <svg width="11" height="7" viewBox="0 0 11 7" fill="none" stroke="#fff" strokeWidth="1.200"><path d="m.5 6.500 5-5 5 5" /></svg>
        </button>
        <svg width="16" height="12" viewBox="0 0 16 12" className="ml-2" fill="none" stroke="#fff" aria-hidden="true"><path d="M5.500 3.500h8v7h-7M14.500 5.500v3M2 0v3M4 0v3M.5 3h5v2.500L4 7v4H8" /><path d="M7 5h3v4H7z" fill="#fff" stroke="none" /></svg>
        <svg width="17" height="16" viewBox="0 0 17 16" className="ml-2" fill="none" stroke="#fff" aria-hidden="true"><circle cx="7.500" cy="7.500" r="7" /><ellipse cx="7.500" cy="7.500" rx="3" ry="7" /><path d="M1 5h13M1 10h13" /><circle cx="13" cy="12" r="3.400" fill="#1b2c42" /><path d="m11 10 4 4" /></svg>
        <svg width="16" height="14" viewBox="0 0 16 14" className="ml-1" fill="none" stroke="#fff" aria-hidden="true"><path d="M.5 5v4h2l4 3.500V1.500L2.500 5zM8.500 5q1.500 2 0 4M10.500 3.500q3 3.500 0 7M13 1.500q4.500 5.500 0 11" /></svg>
        <div className="ml-1 w-8 text-center text-[11px] leading-4">ENG<br />INTL</div>
        <div className="ml-1 w-[58px] whitespace-nowrap text-center text-[11px] leading-4">1:50 PM<br />6/15/2024</div>
        <button aria-label="Notifications" className="ml-2.5 mr-4">
          <svg width="17" height="16" viewBox="0 0 17 16"><path d="M1 1h15v12H8l-3 3v-3H1z" fill="#fff" /><path d="M3 4.500h11M3 7.500h8M3 10.500h5" stroke="#1b2c42" /><circle cx="13" cy="11" r="3" fill="#1b2c42" stroke="#fff" /><path d="m11.500 9.500 3 3" stroke="#fff" /></svg>
        </button>
      </div>
    </footer>
  );
}

export default function App() {
  return (
    <div className={`min-h-screen bg-black px-[3px] text-[11px] ${ui}`}>
      <div className="bg-gradient-to-r from-[#0aa5f0] via-[#0a70d8] to-[#003aa8] pt-1.5">
        <div className="border-l-4 border-[#0b87ab]">
          <div className="relative overflow-hidden border-t border-[#3b5f8a] bg-white">
            <TitleBar />
            <TabRow />
            <Ribbon />
            <FormulaBar />
            <main className="flex">
              <div className="mr-[3px] w-0 grow overflow-hidden border-b border-r border-[#999]">
                <Sheet />
              </div>
              <div className="mt-px flex w-[11px] flex-col border-l border-[#ababab] bg-[#efefef]">
                <button aria-label="Scroll up" className="flex h-3.5 items-center justify-center border-y border-[#ababab] bg-white">
                  <svg width="7" height="4" viewBox="0 0 7 4"><path d="M0 4h7L3.500 0z" fill="#666" /></svg>
                </button>
                <div className="h-[246px] border-b border-[#ababab] bg-white" />
                <button aria-label="Scroll down" className="mt-auto flex h-3.5 items-center justify-center border-y border-[#ababab] bg-white">
                  <svg width="7" height="4" viewBox="0 0 7 4"><path d="M0 0h7L3.500 4z" fill="#666" /></svg>
                </button>
              </div>
            </main>
            <SheetTabs />
            <StatusBar />
            <div className="pointer-events-none absolute bottom-8 right-11 w-[224px] whitespace-nowrap text-[#a9a9a9]">
              <p className="text-lg/6">Activate Windows</p>
              <p className="text-[13px] leading-[18px]">Go to Settings to activate Windows.</p>
            </div>
          </div>
        </div>
      </div>
      <Taskbar />
    </div>
  );
}
